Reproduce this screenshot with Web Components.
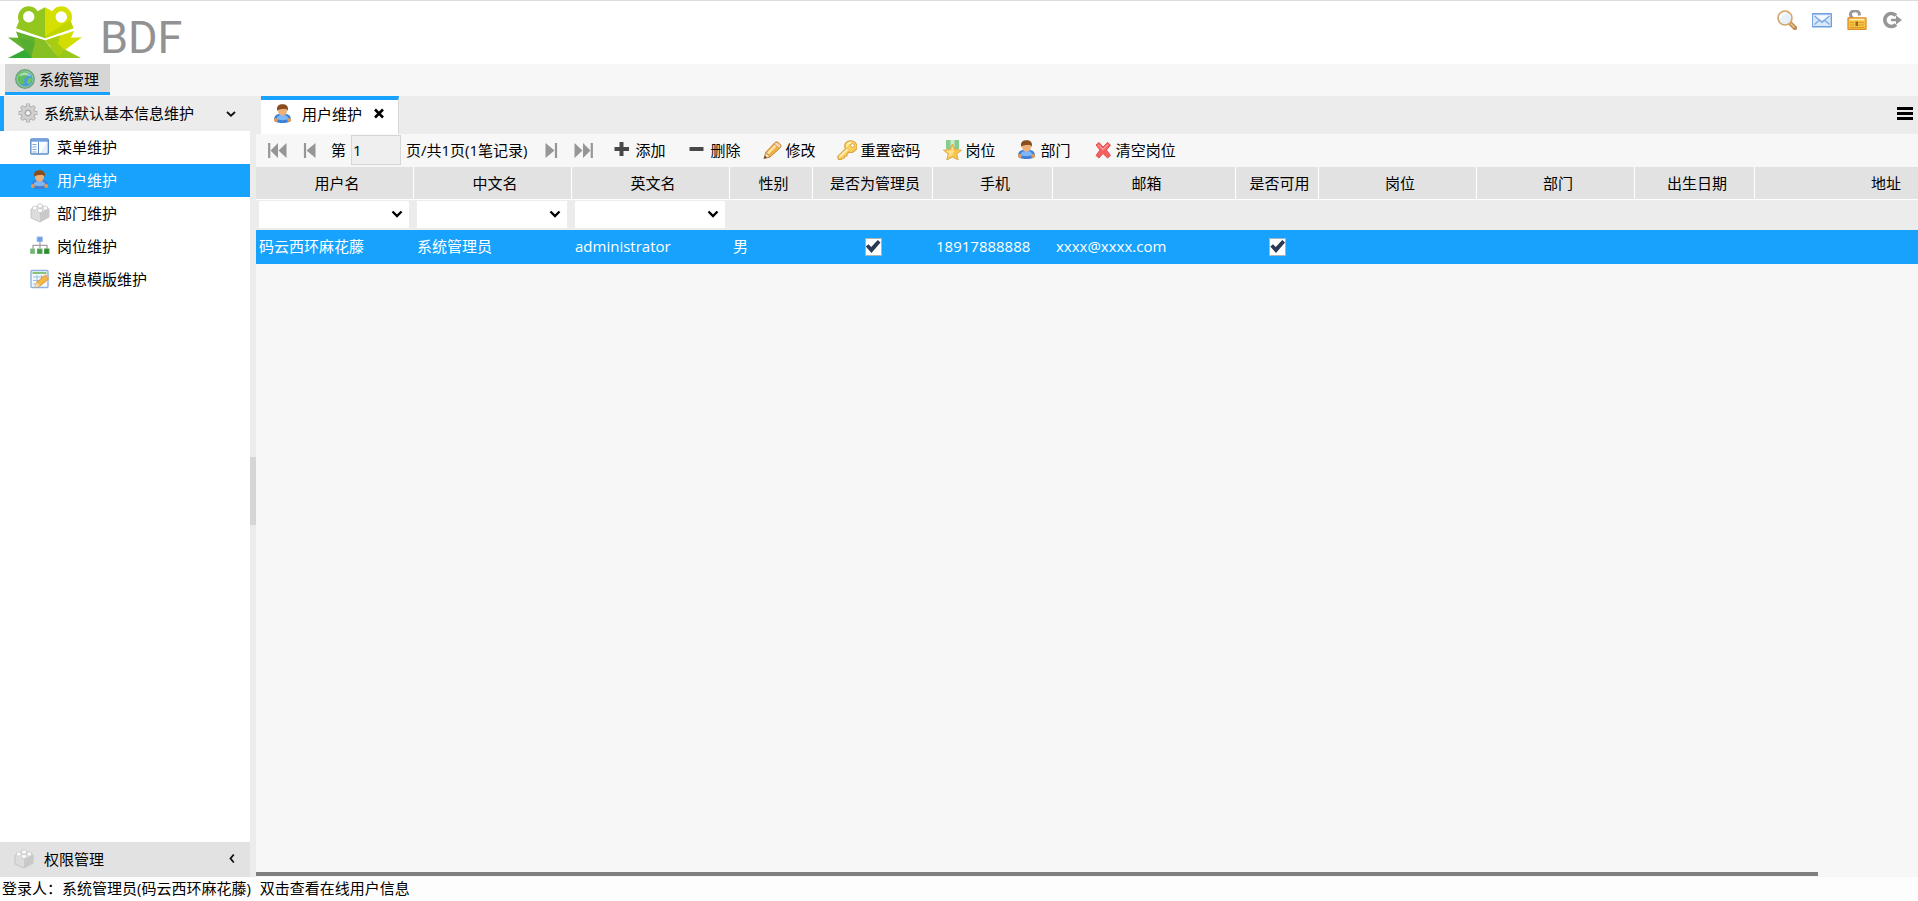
<!DOCTYPE html>
<html lang="zh-CN">
<head>
<meta charset="utf-8">
<title>BDF</title>
<style>
  :root {
    --accent: #17a2fd;
    --panel: #f7f7f7;
    --strip: #ececec;
    --head: #e2e2e2;
  }
  html, body { height: 100%; margin: 0; }
  body {
    font: 15px/20px "Open Sans", "Noto Sans CJK SC", sans-serif;
    color: #000;
    background: #fff;
    overflow: hidden;
  }
</style>
</head>
<body>
<bdf-app></bdf-app>

<template id="t-app">
  <style>
    :host { display: flex; flex-direction: column; height: 100vh; }
    .main { flex: 1; min-height: 0; display: flex; }
    bdf-sidebar { flex: none; width: 250px; }
    .split { flex: none; width: 6px; padding-top: 8px; background: var(--strip); display: flex; flex-direction: column; justify-content: center; }
    .split i { height: 68px; background: #d6d6d6; }
    .work { flex: 1; min-width: 0; display: flex; flex-direction: column; background: var(--panel); }
    bdf-grid { flex: 1; min-height: 0; }
  </style>
  <bdf-header></bdf-header>
  <bdf-menubar></bdf-menubar>
  <div class="main">
    <bdf-sidebar></bdf-sidebar>
    <div class="split"><i></i></div>
    <div class="work">
      <bdf-tabs></bdf-tabs>
      <bdf-toolbar></bdf-toolbar>
      <bdf-grid></bdf-grid>
    </div>
  </div>
  <bdf-status></bdf-status>
</template>

<template id="t-header">
  <style>
    :host { display: flex; align-items: flex-start; height: 63px; border-top: 1px solid #dcdcdc; background: #fff; }
    .brand { display: flex; align-items: center; gap: 18px; padding: 5px 0 0 8px; height: 54px; }
    .brand svg { width: 74px; height: 54px; display: block; overflow: visible; }
    .brand span { font: 400 45px/54px Roboto, sans-serif; color: #929292; padding-top: 9px; }
    nav { margin-left: auto; display: flex; gap: 15px; padding: 9px 16px 0 0; }
    button { border: 0; padding: 0; background: none; height: 20px; }
  </style>
  <div class="brand">
    <svg viewBox="0 0 74 54" aria-hidden="true">
      <circle cx="20.700" cy="11" r="10.700" fill="#93c720"/><circle cx="53.300" cy="11" r="10.700" fill="#d6e000"/>
      <path fill="#93c720" d="M37 1.300V32.300L8 22.300 12 13 29 5.500Z"/>
      <path fill="#d6e000" d="M37 1.300V32.300L65.500 22.300 62 13 45 5.500Z"/>
      <path fill="#c1d500" d="M37 32.300 37 30 62 14 65.500 22.300Z"/>
      <circle cx="20.700" cy="10.700" r="5.700" fill="#fff"/><circle cx="53.300" cy="11" r="5.700" fill="#fff"/>
      <path fill="#62b22f" d="M8 25.500 37 34.500 26 46 30 52H24L17 44 0 31.500 10.300 31.700Z"/>
      <path fill="#d3de00" d="M66 25 37 34.500 48 46 44 52H50L57 44 74 31.300 63 31.700Z"/>
      <path fill="#a6cc14" d="M37 34.500 52 29.500 48 46Z"/>
      <path fill="#86c023" d="M27 31.500 37 34.500 51 52H23Z"/>
      <path fill="#55ae31" d="M10.300 31.700 27 36 23 52 17 44Z"/>
      <path fill="#a9cd12" d="M51 52 57 44 48 36 42 41Z"/>
      <path fill="#35aa35" d="M0 52 17 43.500 24 52Z"/>
      <path fill="#97c81c" d="M73 52 57 43.500 49 52Z"/>
    </svg>
    <span>BDF</span>
  </div>
  <nav>
    <button aria-label="搜索"><bdf-icon name="search"></bdf-icon></button>
    <button aria-label="消息"><bdf-icon name="mail"></bdf-icon></button>
    <button aria-label="锁定"><bdf-icon name="lock"></bdf-icon></button>
    <button aria-label="退出"><bdf-icon name="logout"></bdf-icon></button>
  </nav>
</template>

<template id="t-menubar">
  <style>
    :host { display: flex; height: 32px; background: var(--panel); padding-left: 5px; }
    button { font: inherit; color: inherit; display: flex; align-items: center; gap: 4px; height: 31px; box-sizing: border-box; padding: 2px 9px 0 10px; border: 0; border-bottom: 3px solid var(--accent); background: #d6d6d6; width: 105px; white-space: nowrap; }
  </style>
  <button><bdf-icon name="globe"></bdf-icon><span>系统管理</span></button>
</template>

<template id="t-sidebar">
  <style>
    :host { display: flex; flex-direction: column; background: #fff; }
    button { font: inherit; color: inherit; text-align: left; display: flex; align-items: center; box-sizing: border-box; gap: 6px; height: 35px; border: 0 solid var(--head); border-left-width: 4px; padding: 0 9px 2px 14px; background: var(--head); }
    button.open { background: var(--strip); border-color: var(--accent); }
    button.closed { padding-left: 10px; gap: 10px; }
    button span { flex: 1; }
    .list { flex: 1; display: flex; flex-direction: column; }
  </style>
  <button class="open"><bdf-icon name="gear"></bdf-icon><span>系统默认基本信息维护</span><bdf-icon name="down"></bdf-icon></button>
  <div class="list">
    <bdf-side-item icon="layout">菜单维护</bdf-side-item>
    <bdf-side-item icon="user" selected>用户维护</bdf-side-item>
    <bdf-side-item icon="brick">部门维护</bdf-side-item>
    <bdf-side-item icon="org">岗位维护</bdf-side-item>
    <bdf-side-item icon="note">消息模版维护</bdf-side-item>
  </div>
  <button class="closed"><bdf-icon name="brick"></bdf-icon><span>权限管理</span><bdf-icon name="left"></bdf-icon></button>
</template>

<template id="t-side-item">
  <style>
    :host { display: block; }
    a { display: flex; align-items: center; gap: 7px; box-sizing: border-box; height: 33px; padding: 0 0 2px 30px; color: inherit; text-decoration: none; }
    :host([selected]) a { background: var(--accent); color: #fff; }
  </style>
  <a href="#"><bdf-icon></bdf-icon><slot></slot></a>
</template>

<template id="t-tabs">
  <style>
    :host { display: flex; justify-content: space-between; align-items: flex-start; height: 38px; background: var(--strip); padding: 0 3px 0 5px; }
    .tab { display: flex; align-items: center; box-sizing: border-box; height: 38px; width: 138px; padding: 0 9px 6px 12px; border-top: 4px solid var(--accent); border-right: 1px solid #d6d6d6; background: #fff; }
    .tab span { padding-left: 9px; flex: 1; }
    button { border: 0; padding: 0; background: none; height: 20px; }
    .menu { margin-top: 8px; }
  </style>
  <div class="tab"><bdf-icon name="user"></bdf-icon><span>用户维护</span><button aria-label="关闭"><bdf-icon name="close"></bdf-icon></button></div>
  <button class="menu" aria-label="菜单"><bdf-icon name="bars"></bdf-icon></button>
</template>

<template id="t-toolbar">
  <style>
    :host { display: flex; align-items: center; box-sizing: border-box; height: 33px; background: var(--panel); padding: 0 0 2px 11px; white-space: nowrap; }
    button { font: inherit; color: inherit; border: 0; padding: 0; background: none; display: flex; align-items: center; gap: 4px; }
    .pager { display: flex; align-items: center; }
    .pager > button + button { margin-left: 12px; }
    label { display: flex; align-items: center; padding: 0 14px 0 12px; gap: 5px; }
    input { font: inherit; box-sizing: border-box; width: 50px; height: 30px; border: 1px solid #d6d6d6; background: #efefef; padding: 0 1px; margin: 0; }
    .actions { display: flex; gap: 21px; padding-left: 18px; }
  </style>
  <div class="pager">
    <button aria-label="首页"><bdf-icon name="first"></bdf-icon></button>
    <button aria-label="上一页"><bdf-icon name="prev"></bdf-icon></button>
    <label>第<input type="text" value="1"><span>页/共1页(1笔记录)</span></label>
    <button aria-label="下一页"><bdf-icon name="next"></bdf-icon></button>
    <button aria-label="末页"><bdf-icon name="last"></bdf-icon></button>
  </div>
  <div class="actions">
    <button><bdf-icon name="plus"></bdf-icon>添加</button>
    <button><bdf-icon name="minus"></bdf-icon>删除</button>
    <button><bdf-icon name="pencil"></bdf-icon>修改</button>
    <button><bdf-icon name="key"></bdf-icon>重置密码</button>
    <button><bdf-icon name="medal"></bdf-icon>岗位</button>
    <button><bdf-icon name="user"></bdf-icon>部门</button>
    <button><bdf-icon name="cross"></bdf-icon>清空岗位</button>
  </div>
</template>

<template id="t-grid">
  <style>
    :host { display: flex; flex-direction: column; overflow: hidden; }
    .scroll { flex: 1; min-height: 0; overflow: hidden; }
    table { table-layout: fixed; width: 1757px; border-collapse: separate; border-spacing: 0; }
    .w1 { width: 158px; } .w2 { width: 83px; } .w3 { width: 120px; } .w4 { width: 183px; } .w5 { width: 258px; }
    th, td { padding: 0; box-sizing: border-box; text-align: left; font-weight: 400; white-space: nowrap; }
    th { height: 33px; background: var(--head); border-right: 1px solid #fff; border-bottom: 1px solid #fff; text-align: center; padding-left: 5px; }
    .filter td { height: 30px; background: var(--strip); padding: 0 0 1px 3px; }
    .row td { height: 34px; background: var(--accent); color: #fff; padding: 0 0 2px 3px; }
    .row .c { text-align: center; padding: 0 0 2px; }
    .pick { display: flex; position: relative; width: 150px; }
    select { appearance: none; width: 100%; height: 27px; border: 0; border-radius: 0; background: #fff; font: inherit; margin: 0; }
    .pick bdf-icon { position: absolute; right: 2px; top: 3px; pointer-events: none; }
    input { appearance: none; box-sizing: border-box; width: 17px; height: 18px; margin: 0; border: 1px solid #a9b4bd; background: #fff; vertical-align: middle; }
    input::before { content: ""; display: block; width: 15px; height: 14px; background: #2b3a52; clip-path: polygon(2% 50%, 20% 34%, 38% 54%, 82% 4%, 100% 22%, 40% 96%); }
    .bar { flex: none; width: 94%; height: 4px; margin-bottom: 1px; background: #7f7f7f; }
  </style>
  <div class="scroll">
    <table>
      <colgroup><col class="w1"><col class="w1"><col class="w1"><col class="w2"><col class="w3"><col class="w3"><col class="w4"><col class="w2"><col class="w1"><col class="w1"><col class="w3"><col class="w5"></colgroup>
      <thead>
        <tr><th>用户名</th><th>中文名</th><th>英文名</th><th>性别</th><th>是否为管理员</th><th>手机</th><th>邮箱</th><th>是否可用</th><th>岗位</th><th>部门</th><th>出生日期</th><th>地址</th></tr>
      </thead>
      <tbody>
        <tr class="filter">
          <td><div class="pick"><select aria-label="用户名"></select><bdf-icon name="caret"></bdf-icon></div></td>
          <td><div class="pick"><select aria-label="中文名"></select><bdf-icon name="caret"></bdf-icon></div></td>
          <td><div class="pick"><select aria-label="英文名"></select><bdf-icon name="caret"></bdf-icon></div></td>
          <td></td><td></td><td></td><td></td><td></td><td></td><td></td><td></td><td></td>
        </tr>
        <tr class="row">
          <td>码云西环麻花藤</td><td>系统管理员</td><td>administrator</td><td>男</td>
          <td class="c"><input type="checkbox" checked aria-label="是否为管理员"></td>
          <td>18917888888</td><td>xxxx@xxxx.com</td>
          <td class="c"><input type="checkbox" checked aria-label="是否可用"></td>
          <td></td><td></td><td></td><td></td>
        </tr>
      </tbody>
    </table>
  </div>
  <div class="bar"></div>
</template>

<template id="t-status">
  <style>
    :host { display: flex; align-items: center; box-sizing: border-box; gap: 9px; height: 24px; padding: 0 0 2px 2px; background: #fdfdfd; white-space: nowrap; }
  </style>
  <span>登录人：系统管理员(码云西环麻花藤)</span><span>双击查看在线用户信息</span>
</template>

<script>
  // Every glyph is drawn on a 20 x 20 grid.
  const ICONS = {
    search: '<path d="M13 13 18 18" stroke="#c08a55" stroke-width="4.500" stroke-linecap="round"/><path d="M13.500 13.500 17.500 17.500" stroke="#f0c88e" stroke-width="1.500"/><circle cx="8" cy="8" r="7" fill="#e6f1fb" stroke="#d9a566" stroke-width="1.600"/><path d="M3.500 8A4.500 4.500 0 0 1 9 3.500" fill="none" stroke="#fff" stroke-width="2"/>',
    mail: '<rect x=".2" y="3.700" width="19.200" height="13" rx=".5" fill="#d9e9fb" stroke="#6d9fe0" stroke-width="1.400"/><path d="M2.500 14.500 7.500 10 10 12 12.500 10 17.500 14.500M2.500 6 10 12.500 17.500 6" fill="none" stroke="#7fa9e2" stroke-width="1.300"/><path d="M3.500 5.500H16.500L10 10.500Z" fill="#f4f9ff"/>',
    lock: '<path d="M4.500 7C0 1 11-1.500 12.300 3.500L12.500 5.500" fill="none" stroke="#9a9a9a" stroke-width="3"/><path d="M3 6 5.500 8" stroke="#9a9a9a" stroke-width="3"/><rect x="1" y="8" width="18" height="11.500" rx=".5" fill="#f6c445" stroke="#e08c26" stroke-width="1.300"/><path d="M2.500 9.500H17.500" stroke="#fff0b0" stroke-width="1.500"/><path d="M3 12.500H7M3 15H7M12 12.500H17M12 15H17M3 17.500H17" stroke="#dd9a2a"/><rect x="8.500" y="11.500" width="2.600" height="4.500" fill="#9c6414"/>',
    logout: '<path d="M14 5.500A6.500 6.500 0 1 0 14 14.500" fill="none" stroke="#969696" stroke-width="3.600"/><path d="M9 8.700H14V5.500L20 10 14 14.500V11.300H9Z" fill="#969696"/>',
    globe: '<circle cx="10" cy="10" r="9.300" fill="#8cc79a" stroke="#68a377" stroke-width="1.300"/><circle cx="10.500" cy="10.500" r="7" fill="#4a9ddb"/><path d="M3 8C4 3 9 1.500 13 3L11.500 6 13 7 9 10 9.500 13 7 16C4 15 2.500 12 3 8Z" fill="#62bd62"/><path d="M13 10 16 8.500 17 11 14.500 15.500 12 14Z" fill="#6fc768"/><path d="M4 7.500C6 2.500 13 2 16 7.500 12 5.500 8 5.500 4 7.500Z" fill="#fff" opacity=".5"/>',
    gear: '<g stroke="#b0b0b0" stroke-width="4"><path d="M10 .5V5M10 15V19.500M.5 10H5M15 10H19.500M3.300 3.300 6.500 6.500M13.500 13.500 16.700 16.700M3.300 16.700 6.500 13.500M13.500 6.500 16.700 3.300"/></g><circle cx="10" cy="10" r="5" fill="none" stroke="#b0b0b0" stroke-width="4.800"/><g stroke="#d2d2d2" stroke-width="2.200"><path d="M10 1V4M10 16V19M1 10H4M16 10H19M3.800 3.800 6 6M14 14 16.200 16.200M3.800 16.200 6 14M14 6 16.200 3.800"/></g><circle cx="10" cy="10" r="5" fill="none" stroke="#d2d2d2" stroke-width="3"/><circle cx="10" cy="10" r="2.600" fill="#f2f2f2" stroke="#a3a3a3"/>',
    down: '<path d="M6 9 10 12.700 14 9" fill="none" stroke="#111" stroke-width="1.800"/>',
    left: '<path d="M12.800 5.500 9.500 9.500 12.800 13.500" fill="none" stroke="#111" stroke-width="1.800"/>',
    caret: '<path d="M5.500 7.500 10 12 14.500 7.500" fill="none" stroke="#000" stroke-width="2.400"/>',
    layout: '<rect x=".8" y="2" width="17.500" height="15" rx="1" fill="#fdfefe" stroke="#5c8cc9" stroke-width="1.400"/><path d="M1 3.500H18" stroke="#6fa0e0" stroke-width="2.400"/><path d="M8.500 5V17" stroke="#5c8cc9"/><path d="M2.500 7.500H6.500M2.500 10H6.500M2.500 12.500H6.500M2.500 15H6.500" stroke="#7fa8dc" stroke-width="1.200"/><path d="M10 16 17 6V16Z" fill="#e6effa"/>',
    user: '<path d="M1 15.500C1 11 5 9.500 9.500 9.500S18 11 18 15.500C17 18 15 19 9.500 19S2 18 1 15.500Z" fill="#3f7fd6"/><path d="M3.500 15C4 11.500 7 11 9.500 11S15 11.500 15.500 15C14 16.500 5 16.500 3.500 15Z" fill="#7fb6f6"/><circle cx="2.800" cy="16" r="2" fill="#e39a58"/><circle cx="16.200" cy="16" r="2" fill="#e39a58"/><ellipse cx="9.500" cy="7" rx="4.500" ry="4.600" fill="#eeb07a"/><path d="M4.300 7C3 2 6 .3 9.500 .3S16 2 14.700 7C14 5.500 13 5 11.500 4.800 9 5.300 6 4.800 4.300 7Z" fill="#8a4e1e"/>',
    brick: '<path d="M1 6 10 2 19 5.500V14L10 19 1 15Z" fill="#dcdcdc" stroke="#bdbdbd" stroke-width=".8"/><path d="M10 9.500V19L19 14V5.500Z" fill="#c9c9c9"/><path d="M1 6 10 2 19 5.500 10 9.500Z" fill="#f0f0f0"/><g fill="#fafafa" stroke="#bcbcbc" stroke-width=".7"><path d="M7.500 2C7.500.5 12.500.5 12.500 2V4C12.500 5.500 7.500 5.500 7.500 4Z"/><path d="M2.500 4C2.500 2.700 7 2.700 7 4V6C7 7.500 2.500 7.500 2.500 6Z"/><path d="M13 4C13 2.700 17.500 2.700 17.500 4V6C17.500 7.500 13 7.500 13 6Z"/><path d="M7.500 6.500C7.500 5 12.500 5 12.500 6.500V8.500C12.500 10 7.500 10 7.500 8.500Z"/></g>',
    org: '<path d="M10 5V12M3 13V9.300H17V13" fill="none" stroke="#a3a3a3" stroke-width="1.300"/><rect x="7.200" y="1" width="5" height="4.500" fill="#6c9ee6" stroke="#91b6ec"/><g stroke-width="1"><rect x=".5" y="13" width="4" height="4.500" fill="#73b573" stroke="#8cc48c"/><rect x="7.500" y="13" width="4.500" height="4.500" fill="#459b45" stroke="#62ad62"/><rect x="14.500" y="13" width="4.500" height="4.500" fill="#2f8a2f" stroke="#4f9f4f"/></g>',
    note: '<rect x="1" y="1.500" width="17" height="17" rx="1" fill="#f3f8fe" stroke="#8db2de" stroke-width="1.400"/><path d="M2.500 4H16.500" stroke="#86c27c" stroke-width="2"/><path d="M3 8H16M3 11.500H12M3 15H7M7 6V17M11.500 6V12" stroke="#9dbde2"/><path d="M5 18.500 6.500 13.500 14.500 6.500 18.500 10 10 17Z" fill="#f3b942" stroke="#cf8c2a" stroke-width=".8"/><path d="M14.500 6.500 16 5.300 19.500 8.800 18.500 10Z" fill="#eab08c"/><path d="M5 18.500 6.500 13.500 10 17Z" fill="#f7dcb2"/>',
    close: '<path d="M6 5.500 14 13.500M14 5.500 6 13.500" stroke="#000" stroke-width="2.600"/>',
    bars: '<path d="M2 4.500H18M2 9.500H18M2 14.500H18" stroke="#000" stroke-width="3"/>',
    first: '<path d="M2.200 3V18" stroke="#969696" stroke-width="2.200"/><path d="M11 3V18L3.500 10.500ZM19.500 3V18L11.500 10.500Z" fill="#969696"/>',
    prev: '<path d="M6 3V18" stroke="#969696" stroke-width="2.200"/><path d="M16.500 3V18L7.500 10.500Z" fill="#969696"/>',
    next: '<path d="M14 3V18" stroke="#969696" stroke-width="2.200"/><path d="M3.500 3V18L12.500 10.500Z" fill="#969696"/>',
    last: '<path d="M17.800 3V18" stroke="#969696" stroke-width="2.200"/><path d="M9 3V18L16.500 10.500ZM.5 3V18L8.500 10.500Z" fill="#969696"/>',
    plus: '<path d="M9.500 2V16M2.500 9H17" stroke="#484848" stroke-width="4"/>',
    minus: '<path d="M2.500 9H16.500" stroke="#484848" stroke-width="4"/>',
    pencil: '<path d="M2 18.500 4 12 13 2.500C15 .5 20.500 5 18.500 7.500L8 17Z" fill="#f0b045" stroke="#c98730" stroke-width="1"/><path d="M5 12.500 13.500 4 15.500 5.500 6.500 14.500Z" fill="#fbe3a0"/><path d="M13.500 2.500C15 1 20 5 18.500 7L17 8.500 12 4Z" fill="#f3d3b0" stroke="#c98730" stroke-width=".7"/><path d="M2 18.500 4 12.500 8 17Z" fill="#f6dcc0" stroke="#b07a45" stroke-width=".7"/><path d="M2 18.500 2.900 15.800 5 17.500Z" fill="#54402a"/>',
    key: '<path d="M8.500 9C6 4 10 .5 14 .8 19.500 1.500 22 7 18 10.500 16 12.500 13.500 12.800 12 12L10 14V16H8L7.500 18H5.500L4.500 19.500H1.500L.7 16.500Z" fill="#f9cf5d" stroke="#dca240" stroke-width="1.100"/><path d="M2.500 16.800 10.500 9.500M10 6.500C10 3.500 12.500 2.500 14.500 3" fill="none" stroke="#fdeeb0" stroke-width="2"/><ellipse cx="15.500" cy="5.500" rx="2" ry="1.500" transform="rotate(45 15.500 5.500)" fill="#fff" stroke="#d79b33" stroke-width=".8"/>',
    medal: '<path d="M4 0H17V9H4Z" fill="#86cc8c"/><path d="M8.500 0H12.500V8H8.500Z" fill="#c9ecc9"/><path d="M10.500 4 13 9.500 19.500 10.200 14.800 14 16.200 20 10.500 17 4.800 20 6.200 14 1.500 10.200 8 9.500Z" fill="#f9c64a" stroke="#dfa345" stroke-width=".9"/><path d="M10.500 6.500 12 11 10.500 15 6 17.500 7.500 13.500 4 11 9 10.500Z" fill="#fde08b"/>',
    cross: '<path d="M4 5 7 2.500 11 7 15.500 2.500 18.500 5 14.500 10 18.500 15.500 15.500 18 11 13.500 7 18 4 15.500 8 10Z" fill="#f46060" stroke="#ea5252" stroke-linejoin="round"/><path d="M6 5 11 9.500 16 4.500" fill="none" stroke="#fb9a9a" stroke-width="1.300"/>'
  };

  // Base class: clones the template called t-<name> into an open shadow root.
  const fromTemplate = id => class extends HTMLElement {
    constructor() {
      super();
      this.attachShadow({ mode: 'open' })
        .append(document.getElementById(id).content.cloneNode(true));
    }
  };

  class BdfIcon extends HTMLElement {
    static observedAttributes = ['name'];
    constructor() {
      super();
      this.attachShadow({ mode: 'open' });
    }
    attributeChangedCallback() {
      this.shadowRoot.innerHTML =
        '<style>:host{display:block;flex:none;width:20px;height:20px}svg{display:block;width:100%;height:100%}</style>' +
        '<svg viewBox="0 0 20 20" aria-hidden="true">' + (ICONS[this.getAttribute('name')] || '') + '</svg>';
    }
  }
  customElements.define('bdf-icon', BdfIcon);

  customElements.define('bdf-side-item', class extends fromTemplate('t-side-item') {
    connectedCallback() {
      this.shadowRoot.querySelector('bdf-icon').setAttribute('name', this.getAttribute('icon'));
    }
  });

  for (const name of ['header', 'menubar', 'sidebar', 'tabs', 'toolbar', 'grid', 'status', 'app']) {
    customElements.define('bdf-' + name, class extends fromTemplate('t-' + name) {});
  }
</script>
</body>
</html>
